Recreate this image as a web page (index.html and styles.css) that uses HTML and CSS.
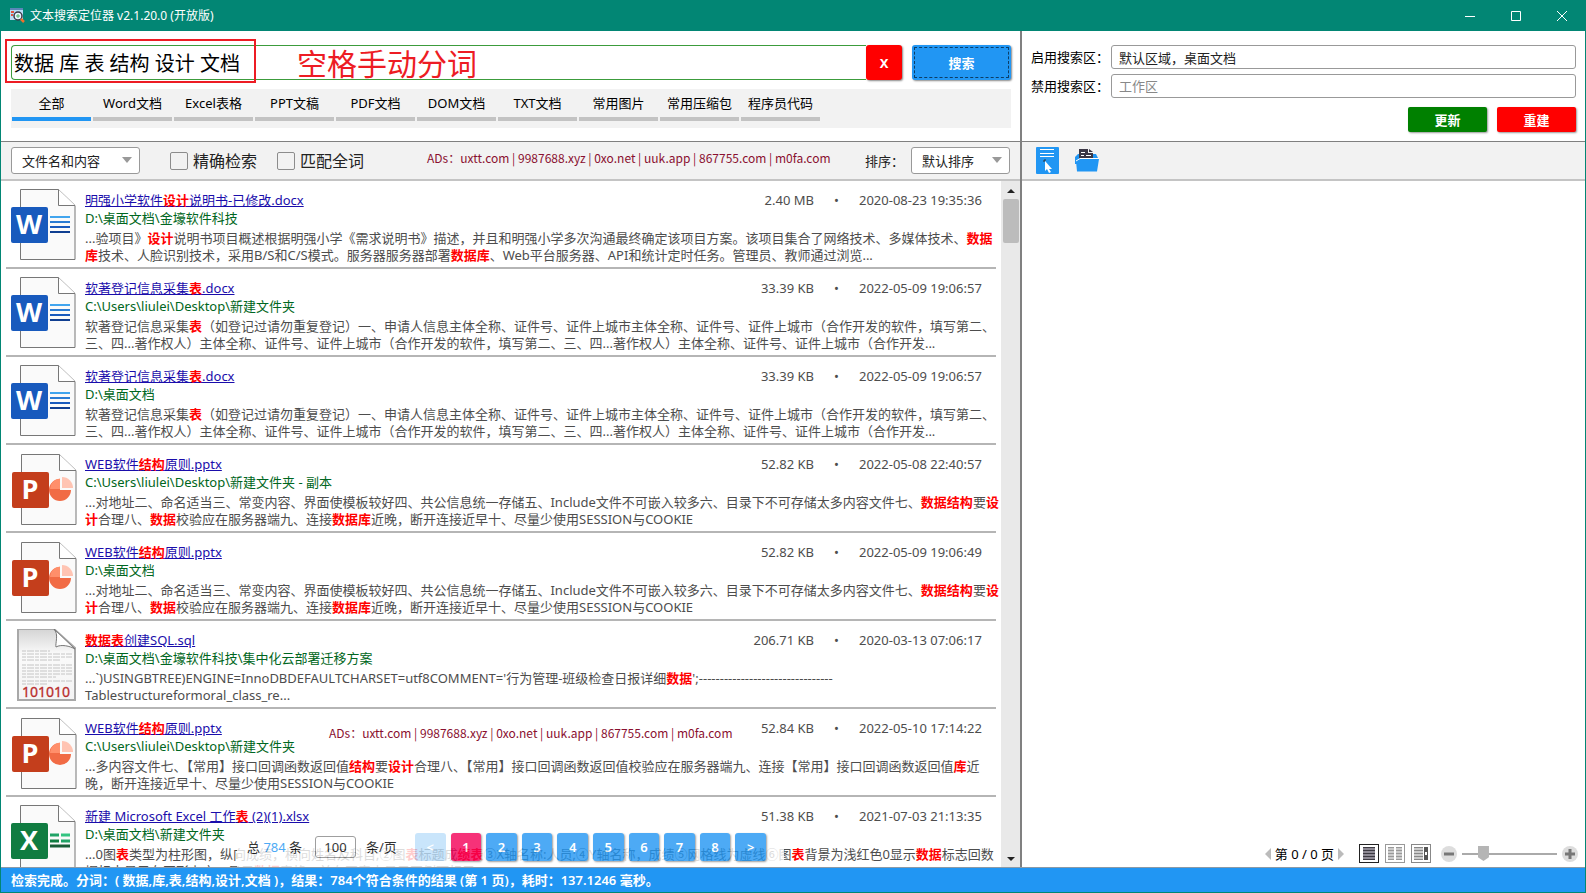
FILE: index.html
```html
<!DOCTYPE html>
<html lang="zh-CN">
<head>
<meta charset="utf-8">
<title>文本搜索定位器</title>
<link rel="stylesheet" href="styles.css">
</head>
<body>
<svg class="defs" aria-hidden="true">
  <symbol id="page" viewBox="0 0 66 72">
    <path d="M9.500 .5h38l16.500 16v54H9.500z" fill="#fafafa" stroke="#777"/>
    <path d="M47.500 .5v16H64" fill="#fff" stroke="#777"/>
  </symbol>
  <symbol id="doc-word" viewBox="0 0 66 72">
    <use href="#page" width="66" height="72"/>
    <path d="M39 28h20" stroke="#41a5ee" stroke-width="2"/>
    <path d="M39 33h20" stroke="#2b7cd3" stroke-width="2"/>
    <path d="M39 38h20" stroke="#185abd" stroke-width="2"/>
    <path d="M39 43h20" stroke="#103f91" stroke-width="2"/>
    <rect x="0" y="18" width="37" height="36" rx="2" fill="#185abd"/>
    <text x="18" y="45" text-anchor="middle" class="tile-letter">W</text>
  </symbol>
  <symbol id="doc-ppt" viewBox="0 0 66 72">
    <use href="#page" x="1" y="1" width="66" height="72"/>
    <path d="M49 36V26a11 11 0 1 0 11 11H49z" fill="#f16b45"/>
    <path d="M49 36V25.500a10.500 10.500 0 0 0-10 10.500z" fill="#ff8f6b"/>
    <path d="M51 35V24a11 11 0 0 1 11 11z" fill="#ffc4b3"/>
    <rect x="1" y="19" width="37" height="36" rx="2" fill="#c43e1c"/>
    <text x="19" y="46" text-anchor="middle" class="tile-letter">P</text>
  </symbol>
  <symbol id="doc-excel" viewBox="0 0 66 72">
    <use href="#page" x="0" width="66" height="72"/>
    <path d="M39 30h9" stroke="#21a366" stroke-width="3"/><path d="M50 30h9" stroke="#33c481" stroke-width="3"/>
    <path d="M39 36h9" stroke="#107c41" stroke-width="3"/><path d="M50 36h9" stroke="#21a366" stroke-width="3"/>
    <path d="M39 41h20" stroke="#185c37" stroke-width="3"/>
    <rect x="0" y="18" width="37" height="36" rx="2" fill="#107c41"/>
    <text x="18" y="45" text-anchor="middle" class="tile-letter">X</text>
  </symbol>
  <symbol id="doc-bin" viewBox="0 0 66 72">
    <linearGradient id="sheet" x1="0" y1="0" x2="0" y2="1"><stop offset="0" stop-color="#d4d4d4"/><stop offset=".35" stop-color="#fafafa"/><stop offset="1" stop-color="#f4f4f4"/></linearGradient>
    <path d="M7 0h36l21 19v52H7z" fill="url(#sheet)" stroke="#a8a8a8" stroke-width="2"/>
    <path d="M43 0c5 5 1 15 2 18 5-3 14-1 19 2z" fill="#fff" stroke="#777"/>
    <path d="M11 22h28M11 25h50M11 28h50M11 31h38M11 36h50M11 39h50M11 42h50M11 45h50M11 48h34M11 52h50M11 55h26" stroke="#c4c4c4" stroke-dasharray="4 1 7 1"/>
    <text x="35" y="68" text-anchor="middle" class="bin-digits">101010</text>
  </symbol>
</svg>

<div class="window">
  <header class="titlebar">
    <svg class="app-icon" viewBox="0 0 15 15" aria-hidden="true">
      <path d="M0 0h13v12H0z" fill="#b9dcf5"/><path d="M0 0h13v2H0z" fill="#5b86b8"/><path d="M1 3h3v2H1zM1 6h2v2H1z" fill="#e0523e"/>
      <circle cx="8" cy="8" r="4" fill="#e8f6ff" stroke="#3d3947" stroke-width="1.500"/><path d="M6 8h4M8 6v4" stroke="#56b46b"/>
      <path d="M11 11l3 3" stroke="#f0702b" stroke-width="2.500"/>
    </svg>
    <h1>文本搜索定位器 v2.1.20.0 (开放版)</h1>
    <button class="win-btn" aria-label="最小化"><svg viewBox="0 0 10 10"><path d="M0 5.500h10"/></svg></button>
    <button class="win-btn" aria-label="最大化"><svg viewBox="0 0 10 10"><path d="M.5 .5h9v9h-9z"/></svg></button>
    <button class="win-btn" aria-label="关闭"><svg viewBox="0 0 10 10"><path d="M0 0l10 10M10 0L0 10"/></svg></button>
  </header>

  <div class="panes">
    <main class="left">
      <section class="head">
        <form class="search" onsubmit="return false">
          <input class="query" type="text" aria-label="搜索词" value="数据 库 表 结构 设计 文档">
          <button class="clear" type="button">X</button>
          <button class="go" type="submit">搜索</button>
        </form>
        <span class="mark-box"></span>
        <span class="mark-text">空格手动分词</span>
        <nav class="tabs">
          <button class="tab active">全部</button><button class="tab">Word文档</button><button class="tab">Excel表格</button><button class="tab">PPT文稿</button><button class="tab">PDF文档</button><button class="tab">DOM文档</button><button class="tab">TXT文档</button><button class="tab">常用图片</button><button class="tab">常用压缩包</button><button class="tab">程序员代码</button>
        </nav>
      </section>

      <section class="toolbar">
        <span class="drop scope"><select aria-label="搜索范围"><option>文件名和内容</option></select></span>
        <label class="check"><input type="checkbox">精确检索</label>
        <label class="check"><input type="checkbox">匹配全词</label>
        <span class="ads">ADs：uxtt.com | 9987688.xyz | 0xo.net | uuk.app | 867755.com | m0fa.com</span>
        <label class="sort-label" for="sort">排序：</label>
        <span class="drop sort"><select id="sort"><option>默认排序</option></select></span>
      </section>

      <section class="list">
        <div class="rows">
          <article class="row">
            <svg class="file"><use href="#doc-word"/></svg>
            <div class="info">
              <div class="line"><a href="#">明强小学软件<b>设计</b>说明书-已修改.docx</a><span class="size">2.40 MB</span><span class="dot">•</span><time>2020-08-23 19:35:36</time></div>
              <p class="path">D:\桌面文档\金壕软件科技</p>
              <p class="snip">...验项目》<b>设计</b>说明书项目概述根据明强小学《需求说明书》描述，并且和明强小学多次沟通最终确定该项目方案。该项目集合了网络技术、多媒体技术、<b>数据</b><br><b>库</b>技术、人脸识别技术，采用B/S和C/S模式。服务器服务器部署<b>数据库</b>、Web平台服务器、API和统计定时任务。管理员、教师通过浏览...</p>
            </div>
          </article>
          <article class="row">
            <svg class="file"><use href="#doc-word"/></svg>
            <div class="info">
              <div class="line"><a href="#">软著登记信息采集<b>表</b>.docx</a><span class="size">33.39 KB</span><span class="dot">•</span><time>2022-05-09 19:06:57</time></div>
              <p class="path">C:\Users\liulei\Desktop\新建文件夹</p>
              <p class="snip">软著登记信息采集<b>表</b>（如登记过请勿重复登记）一、申请人信息主体全称、证件号、证件上城市主体全称、证件号、证件上城市（合作开发的软件，填写第二、<br>三、四...著作权人）主体全称、证件号、证件上城市（合作开发的软件，填写第二、三、四...著作权人）主体全称、证件号、证件上城市（合作开发...</p>
            </div>
          </article>
          <article class="row">
            <svg class="file"><use href="#doc-word"/></svg>
            <div class="info">
              <div class="line"><a href="#">软著登记信息采集<b>表</b>.docx</a><span class="size">33.39 KB</span><span class="dot">•</span><time>2022-05-09 19:06:57</time></div>
              <p class="path">D:\桌面文档</p>
              <p class="snip">软著登记信息采集<b>表</b>（如登记过请勿重复登记）一、申请人信息主体全称、证件号、证件上城市主体全称、证件号、证件上城市（合作开发的软件，填写第二、<br>三、四...著作权人）主体全称、证件号、证件上城市（合作开发的软件，填写第二、三、四...著作权人）主体全称、证件号、证件上城市（合作开发...</p>
            </div>
          </article>
          <article class="row">
            <svg class="file"><use href="#doc-ppt"/></svg>
            <div class="info">
              <div class="line"><a href="#">WEB软件<b>结构</b>原则.pptx</a><span class="size">52.82 KB</span><span class="dot">•</span><time>2022-05-08 22:40:57</time></div>
              <p class="path">C:\Users\liulei\Desktop\新建文件夹 - 副本</p>
              <p class="snip">...对地址二、命名适当三、常变内容、界面使模板较好四、共公信息统一存储五、Include文件不可嵌入较多六、目录下不可存储太多内容文件七、<b>数据结构</b>要<b>设</b><br><b>计</b>合理八、<b>数据</b>校验应在服务器端九、连接<b>数据库</b>近晚，断开连接近早十、尽量少使用SESSION与COOKIE</p>
            </div>
          </article>
          <article class="row">
            <svg class="file"><use href="#doc-ppt"/></svg>
            <div class="info">
              <div class="line"><a href="#">WEB软件<b>结构</b>原则.pptx</a><span class="size">52.82 KB</span><span class="dot">•</span><time>2022-05-09 19:06:49</time></div>
              <p class="path">D:\桌面文档</p>
              <p class="snip">...对地址二、命名适当三、常变内容、界面使模板较好四、共公信息统一存储五、Include文件不可嵌入较多六、目录下不可存储太多内容文件七、<b>数据结构</b>要<b>设</b><br><b>计</b>合理八、<b>数据</b>校验应在服务器端九、连接<b>数据库</b>近晚，断开连接近早十、尽量少使用SESSION与COOKIE</p>
            </div>
          </article>
          <article class="row">
            <svg class="file"><use href="#doc-bin"/></svg>
            <div class="info">
              <div class="line"><a href="#"><b>数据表</b>创建SQL.sql</a><span class="size">206.71 KB</span><span class="dot">•</span><time>2020-03-13 07:06:17</time></div>
              <p class="path">D:\桌面文档\金壕软件科技\集中化云部署迁移方案</p>
              <p class="snip">...`)USINGBTREE)ENGINE=InnoDBDEFAULTCHARSET=utf8COMMENT='行为管理-班级检查日报详细<b>数据</b>';--------------------------------<br>Tablestructureformoral_class_re...</p>
            </div>
          </article>
          <article class="row">
            <svg class="file"><use href="#doc-ppt"/></svg>
            <div class="info">
              <div class="line"><a href="#">WEB软件<b>结构</b>原则.pptx</a><span class="size">52.84 KB</span><span class="dot">•</span><time>2022-05-10 17:14:22</time></div>
              <p class="path">C:\Users\liulei\Desktop\新建文件夹</p>
              <p class="snip">...多内容文件七、【常用】接口回调函数返回值<b>结构</b>要<b>设计</b>合理八、【常用】接口回调函数返回值校验应在服务器端九、连接【常用】接口回调函数返回值<b>库</b>近<br>晚，断开连接近早十、尽量少使用SESSION与COOKIE</p>
            </div>
            <span class="ads ads-over">ADs：uxtt.com | 9987688.xyz | 0xo.net | uuk.app | 867755.com | m0fa.com</span>
          </article>
          <article class="row">
            <svg class="file"><use href="#doc-excel"/></svg>
            <div class="info">
              <div class="line"><a href="#">新建 Microsoft Excel 工作<b>表</b> (2)(1).xlsx</a><span class="size">51.38 KB</span><span class="dot">•</span><time>2021-07-03 21:13:35</time></div>
              <p class="path">D:\桌面文档\新建文件夹</p>
              <p class="snip">...0图<b>表</b>类型为柱形图，纵向成绩，横向姓名及科目;②图<b>表</b>标题成<b>绩表</b>③X轴名称:人员;④Y轴名称，成绩⑤网格线为虚线⑥图<b>表</b>背景为浅红色0显示<b>数据</b>标志回数<br>据标志显示在图形上方，显示<b>数据</b>表格，并在图表中显示图例项标示...</p>
            </div>
          </article>
        </div>
        <div class="scroll"><i class="up"></i><i class="thumb"></i><i class="down"></i></div>
        <div class="pager">
          <span class="total">总 <em>784</em> 条</span>
          <input type="text" value="100" aria-label="每页条数">
          <span class="per">条/页</span>
          <div class="pages"><button disabled>&lt;</button><button class="current">1</button><button>2</button><button>3</button><button>4</button><button>5</button><button>6</button><button>7</button><button>8</button><button>&gt;</button></div>
        </div>
      </section>
    </main>

    <aside class="right">
      <section class="head zones">
        <div class="zone"><label for="on">启用搜索区：</label><input id="on" type="text" value="默认区域，桌面文档"></div>
        <div class="zone"><label for="off">禁用搜索区：</label><input id="off" type="text" placeholder="工作区"></div>
        <div class="acts"><button class="update">更新</button><button class="rebuild">重建</button></div>
      </section>
      <section class="toolbar tools">
        <button class="tool" aria-label="选择文本"><svg width="23" height="27" viewBox="0 0 23 27"><rect width="23" height="27" rx="1" fill="#2196f3"/><path d="M4 2.500h14M4 6.500h14M4 9.500h14" stroke="#fff"/><path d="M9 14v10l2-2 2 4 2-1-2-3h3z" fill="#fff"/><path d="M7 14h2M9 12v2" stroke="#333"/></svg></button>
        <button class="tool" aria-label="打开文件夹"><svg width="24" height="23" viewBox="0 0 24 23"><path d="M0 8l3-3h18l2 4v6H0z" fill="#2196f3"/><path d="M4 0h9v4h5v7H4z" fill="#3b3745"/><path d="M14 0l4 3h-4z" fill="#3b3745"/><path d="M6 3.500h4M6 6.500h3M11 6.500h5" stroke="#fff"/><path d="M4 10h20l-2 12.500H2L1 12h3z" fill="#2196f3"/><path d="M1 12l4-2.500h19" fill="none" stroke="#fff"/></svg></button>
      </section>
      <section class="preview">
        <div class="viewbar">
          <i class="tri prev"></i><span class="pageno">第 0 / 0 页</span><i class="tri next"></i>
          <button class="view v1" aria-label="单页"><svg width="20" height="19" viewBox="0 0 20 19"><rect x=".5" y=".5" width="19" height="18" fill="#fff" stroke="#222"/><path d="M4 3h12v13H4z" fill="#8d8994"/><path d="M4 3.500h12M4 6.500h12M4 9.500h12M4 12.500h12M4 15.500h12" stroke="#3c3a42"/></svg></button>
          <button class="view" aria-label="双页"><svg width="20" height="19" viewBox="0 0 20 19"><rect x=".5" y=".5" width="19" height="18" fill="#fff" stroke="#999"/><path d="M3 3h6v13H3zM11 3h6v13h-6z" fill="#ccc"/><path d="M3 3.500h6M3 6.500h6M3 9.500h6M3 12.500h6M3 15.500h6M11 3.500h6M11 6.500h6M11 9.500h6M11 12.500h6M11 15.500h6" stroke="#999"/></svg></button>
          <button class="view" aria-label="滚动视图"><svg width="20" height="19" viewBox="0 0 20 19"><rect x=".5" y=".5" width="19" height="18" fill="#fff" stroke="#888"/><path d="M3 3h9v13H3z" fill="#ccc"/><path d="M3 3.500h9M3 6.500h9M3 9.500h9M3 12.500h9M3 15.500h9" stroke="#888"/><path d="M13 3h4v13h-4z" fill="#555"/><path d="M14 8h2v3h-2z" fill="#fff"/></svg></button>
          <button class="zoom minus" aria-label="缩小"><svg viewBox="0 0 16 16"><circle cx="8" cy="8" r="8" fill="#ddd"/><path d="M3 8h10" stroke="#777" stroke-width="3"/></svg></button>
          <input class="slider" type="range" min="0" max="100" value="19" aria-label="缩放">
          <button class="zoom" aria-label="放大"><svg viewBox="0 0 16 16"><circle cx="8" cy="8" r="8" fill="#ddd"/><path d="M3 8h10M8 3v10" stroke="#777" stroke-width="3"/></svg></button>
        </div>
      </section>
    </aside>
  </div>

  <footer class="status">检索完成。分词：( 数据,库,表,结构,设计,文档 )，结果：784个符合条件的结果 (第 1 页)，耗时：137.1246 毫秒。</footer>
</div>
</body>
</html>
```
FILE: styles.css
```css
* { box-sizing: border-box; }
body { margin: 0; overflow: hidden; font: 13px/18px "Noto Sans", "Noto Sans CJK SC", sans-serif; color: #000; background: #fff; }
button, input, select { font: inherit; color: inherit; margin: 0; }
button { border: 0; padding: 0; background: none; }
p, h1 { margin: 0; font-weight: normal; }
.defs { position: absolute; width: 0; height: 0; }
.tile-letter { font: bold 27px "Open Sans", sans-serif; fill: #fff; }
.bin-digits { font: 14px "Noto Sans", sans-serif; fill: #b92d2d; stroke: #b92d2d; stroke-width: 0.3px; }

.window { height: 100vh; display: flex; flex-direction: column; border: solid #028674; border-width: 0 1px 1px; }
.titlebar { flex: none; height: 31px; display: flex; align-items: center; background: #028674; color: #fff; padding-left: 9px; }
.titlebar h1 { flex: 1; font-size: 12px; margin-left: 5px; }
.app-icon { width: 15px; height: 15px; }
.win-btn { width: 46px; height: 31px; }
.win-btn svg { width: 10px; height: 10px; display: block; margin: 0 auto; fill: none; stroke: #fff; overflow: visible; }

.panes { flex: 1; min-height: 0; display: grid; grid-template-columns: minmax(0, 1019fr) minmax(0, 565fr); }
.left, .right { display: flex; flex-direction: column; min-height: 0; }
.right { border-left: 2px solid #808080; }
.head { position: relative; flex: none; height: 111px; border-bottom: 1px solid #808080; background: #fff; }
.left .head { padding: 14px 9px 0 10px; }

.search { display: flex; height: 35px; }
.query { flex: 1; min-width: 0; border: 1px solid #3c9c3c; border-right: 0; border-radius: 4px 0 0 4px; font-size: 20px; padding: 0 2px; background: #fff; outline: 0; }
.clear, .go { font-weight: bold; color: #fff; border-radius: 3px; box-shadow: 1px 1px 2px #888; }
.clear { width: 36px; background: #f00; }
.go { width: 99px; margin-left: 10px; background: #2196f3; outline: 1px dashed #0b3d66; outline-offset: -3px; }
.mark-box { position: absolute; left: 4px; top: 8px; width: 251px; height: 44px; border: 2px solid #ed1c24; }
.mark-text { position: absolute; left: 296px; top: 13px; font-size: 30px; line-height: 40px; color: #ed1c24; }
.tabs { display: flex; gap: 2px; margin-top: 9px; height: 39px; padding-left: 1px; background: #f2f2f2; }
.tab { width: 79px; height: 32px; border-bottom: 4px solid #c3c3c3; white-space: nowrap; }
.tab.active { border-color: #2196f3; }

.toolbar { flex: none; height: 39px; display: flex; align-items: center; background: #f2f2f2; border-bottom: 2px solid #c4c4c4; padding: 0 10px; color: #222; }
.drop { position: relative; height: 27px; }
.drop select { width: 100%; height: 100%; appearance: none; border: 1px solid #999; border-radius: 3px; background: #fff; padding: 0 10px; }
.drop::after { content: ""; position: absolute; right: 8px; top: 10px; border: 5px solid transparent; border-top: 6px solid #999; border-bottom: 0; pointer-events: none; }
.scope { width: 129px; margin-right: 30px; }
.sort { width: 99px; }
.check { display: flex; align-items: center; gap: 5px; font-size: 16px; margin-right: 20px; }
.check input { appearance: none; width: 18px; height: 18px; border: 1px solid #8c8c8c; border-radius: 2px; }
.ads { flex: 1; margin: 0 0 5px 43px; font-family: "Noto Sans CJK SC", sans-serif; font-size: 12px; color: #8a1030; white-space: nowrap; }
.sort-label { margin-right: 7px; }

.list { position: relative; flex: 1; min-height: 0; display: flex; overflow: hidden; }
.rows { flex: 1; min-width: 0; padding: 0 5px; overflow: hidden; }
.row { position: relative; display: flex; gap: 8px; height: 88px; padding: 10px 0 0 5px; border-bottom: 2px solid #b5b5b5; }
.file { flex: none; width: 66px; height: 72px; margin-top: -2px; overflow: visible; }
.info { flex: 1; min-width: 0; color: #4d4d4d; }
.line { display: flex; padding-right: 9px; }
.line a { flex: 1; color: #1a0dab; text-decoration: underline; }
.line time { width: 128px; }
.dot { width: 45px; text-align: center; }
.path { color: #006621; }
.snip { margin-top: 3px; line-height: 17px; white-space: nowrap; }
b { color: #f00; }
.ads-over { position: absolute; left: 323px; top: 15px; margin: 0; }

.scroll { flex: none; width: 19px; background: #e9e9e9; display: flex; flex-direction: column; align-items: center; }
.up { margin-top: 8px; border: 4px solid transparent; border-top: 0; border-bottom-color: #222; }
.thumb { width: 16px; height: 44px; margin-top: 6px; background: #bcbcbc; border-radius: 2px; }
.down { margin-top: auto; margin-bottom: 6px; border: 4px solid transparent; border-bottom: 0; border-top-color: #222; }

.pager { position: absolute; left: 236px; bottom: 0; height: 40px; display: flex; align-items: center; padding: 0 18px 0 10px; background: #fff; opacity: 0.8; }
.total { width: 68px; }
.pager em { font-style: normal; color: #2196f3; }
.pager input { width: 41px; height: 22px; border: 1px solid #888; border-radius: 3px; text-align: center; padding: 0; background: transparent; }
.per { width: 49px; margin-left: 10px; }
.pages { width: 351px; display: flex; gap: 5px; }
.pages button { flex: 1; height: 28px; border-radius: 3px; background: #2196f3; color: #fff; font-weight: 600; box-shadow: 1px 1px 2px #888; }
.pages button:disabled { background: #bcdffb; box-shadow: none; }
.pages .current { background: #f50057; }

.zones { display: flex; flex-direction: column; gap: 5px; padding: 14px 9px 0; }
.zone { display: flex; align-items: center; height: 24px; }
.zone label { width: 80px; white-space: nowrap; }
.zone input { flex: 1; min-width: 0; height: 24px; border: 1px solid #999; border-radius: 3px; padding: 0 7px; background: #fff; color: #222; }
.zone input::placeholder { color: #888; }
.acts { display: flex; justify-content: flex-end; gap: 10px; margin-top: 4px; }
.acts button { width: 79px; height: 25px; border-radius: 2px; color: #fff; font-weight: bold; box-shadow: 1px 1px 2px #999; }
.update { background: #008000; }
.rebuild { background: #f00; }
.tools { gap: 16px; padding-left: 14px; }
.tool svg { display: block; }

.preview { flex: 1; display: flex; align-items: flex-end; justify-content: flex-end; background: #fff; }
.viewbar { display: flex; align-items: center; height: 27px; padding-right: 7px; }
.tri { border: 6px solid transparent; }
.prev { border-left: 0; border-right-color: #bbb; }
.next { border-right: 0; border-left-color: #bbb; }
.pageno { margin: 0 4px; }
.view { margin-right: 6px; }
.v1 { margin-left: 15px; }
.view svg, .zoom svg { display: block; }
.zoom { width: 16px; height: 16px; }
.minus { margin-left: 4px; }
.slider { appearance: none; width: 95px; height: 16px; margin: 0 5px; background: linear-gradient(#aaa, #aaa) center / 100% 2px no-repeat; }
.slider::-webkit-slider-thumb { appearance: none; width: 11px; height: 15px; background: #b5b5b5; clip-path: polygon(0 0, 100% 0, 100% 75%, 50% 100%, 0 75%); }

.status { flex: none; height: 25px; line-height: 24px; border-top: 1px solid #8a9aa8; background: #2196f3; color: #fff; font-weight: 600; padding-left: 10px; white-space: nowrap; }
```
